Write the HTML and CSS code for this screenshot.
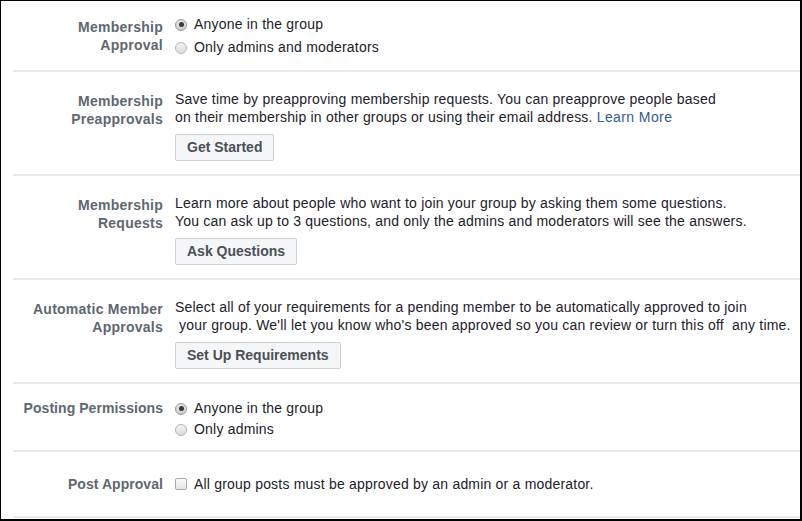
FILE: index.html
```html
<!DOCTYPE html>
<html lang="en">
<head>
<meta charset="utf-8">
<title>Group Settings</title>
<link rel="stylesheet" href="styles.css">
</head>
<body>
<div class="frame">

  <section class="row row-center">
    <div class="label">Membership<br>Approval</div>
    <div class="body">
      <label class="option option-tall"><span class="radio checked"></span>Anyone in the group</label>
      <label class="option option-tall"><span class="radio"></span>Only admins and moderators</label>
    </div>
  </section>

  <section class="row row-text">
    <div class="label">Membership<br>Preapprovals</div>
    <div class="body">
      <p class="desc">Save time by preapproving membership requests. You can preapprove people based<br>on their membership in other groups or using their email address. <a class="link" href="#">Learn More</a></p>
      <button class="btn" type="button">Get Started</button>
    </div>
  </section>

  <section class="row row-text">
    <div class="label">Membership<br>Requests</div>
    <div class="body">
      <p class="desc">Learn more about people who want to join your group by asking them some questions.<br>You can ask up to 3 questions, and only the admins and moderators will see the answers.</p>
      <button class="btn" type="button">Ask Questions</button>
    </div>
  </section>

  <section class="row row-text">
    <div class="label">Automatic Member<br>Approvals</div>
    <div class="body">
      <p class="desc">Select all of your requirements for a pending member to be automatically approved to join<br>&nbsp;your group. We'll let you know who's been approved so you can review or turn this off&nbsp; any time.</p>
      <button class="btn" type="button">Set Up Requirements</button>
    </div>
  </section>

  <section class="row row-radios">
    <div class="label label-line">Posting Permissions</div>
    <div class="body">
      <label class="option"><span class="radio checked"></span>Anyone in the group</label>
      <label class="option"><span class="radio"></span>Only admins</label>
    </div>
  </section>

  <section class="row row-check">
    <div class="label label-line">Post Approval</div>
    <div class="body">
      <label class="option option-check"><span class="checkbox"></span>All group posts must be approved by an admin or a moderator.</label>
    </div>
  </section>

</div>
</body>
</html>
```

FILE: styles.css
```css
* {
  box-sizing: border-box;
}

html, body {
  margin: 0;
  padding: 0;
  background: #ffffff;
}

body {
  font-family: "Liberation Sans", Arial, Helvetica, sans-serif;
  font-size: 14px;
  color: #1d2129;
}

.frame {
  width: 802px;
  height: 521px;
  border-style: solid;
  border-color: #000000;
  border-width: 1px 2px 2px 1px;
  overflow: hidden;
}

/* settings row: label column + content column */
.row {
  display: grid;
  grid-template-columns: 150px 1fr;
  column-gap: 12px;
  margin-left: 12px;
  border-bottom: 2px solid #e8e9eb;
}

.row-center {
  align-items: center;
  padding: 12px 0 11px;
}

.row-text {
  padding: 18px 0 13px;
}

.row-radios {
  padding: 14px 0 10px;
}

.row-check {
  padding: 21px 0 21px;
}

.label {
  text-align: right;
  font-weight: bold;
  color: #606770;
  line-height: 18px;
  white-space: nowrap;
  letter-spacing: 0.25px;
}

.label-line {
  letter-spacing: 0.05px;
}

.row-text .label {
  padding-top: 2px;
}

.row-radios .label {
  line-height: 21px;
}

.row-check .label {
  line-height: 22px;
}

.body {
  display: flex;
  flex-direction: column;
  align-items: flex-start;
}

.desc {
  margin: 0;
  line-height: 18px;
  white-space: nowrap;
  letter-spacing: 0.2px;
}

.link {
  color: #365899;
  text-decoration: none;
  letter-spacing: 0.4px;
}

.btn {
  margin-top: 8px;
  height: 27px;
  padding: 0 11px;
  border: 1px solid #ced0d4;
  border-radius: 2px;
  background: #f5f6f7;
  font-family: inherit;
  font-size: 14px;
  font-weight: bold;
  color: #4b4f56;
  letter-spacing: 0;
  line-height: 25px;
}

.option {
  display: flex;
  align-items: center;
  gap: 7px;
  line-height: 21px;
  white-space: nowrap;
  letter-spacing: 0.2px;
}

.option-tall {
  line-height: 23px;
}

.option-check {
  line-height: 22px;
}

/* radio button drawn with CSS */
.radio {
  flex: none;
  width: 12px;
  height: 12px;
  border-radius: 50%;
  border: 1px solid #b4b4b4;
  background: linear-gradient(#f4f4f4, #dcdcdc);
  position: relative;
}

.radio.checked {
  border-color: #9a9a9a;
  background: linear-gradient(#e6e6e6, #cfcfcf);
}

.radio.checked::after {
  content: "";
  position: absolute;
  left: 2.5px;
  top: 2.5px;
  width: 5px;
  height: 5px;
  border-radius: 50%;
  background: #3a3a3a;
}

/* checkbox drawn with CSS */
.checkbox {
  flex: none;
  width: 12px;
  height: 12px;
  border-radius: 2px;
  border: 1px solid #a9a9a9;
  background: linear-gradient(#fbfbfb, #e4e4e4);
}
```
